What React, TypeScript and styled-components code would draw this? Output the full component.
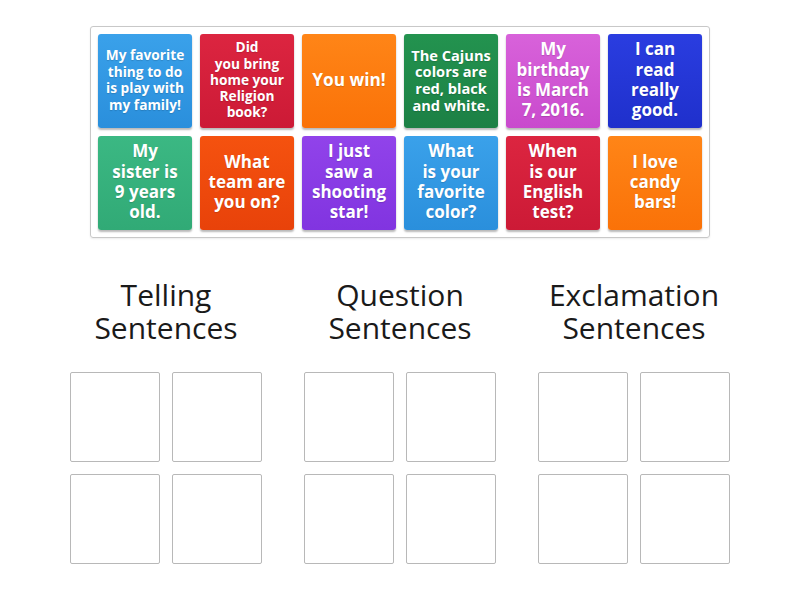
import React from "react";
import styled, { createGlobalStyle } from "styled-components";

const Global = createGlobalStyle`
  html, body { margin: 0; padding: 0; background: #ffffff; }
  body { font-family: "Open Sans", "DejaVu Sans", sans-serif; }
`;

const Page = styled.div`
  width: 800px;
  height: 600px;
  display: flex;
  flex-direction: column;
  align-items: center;
  padding-top: 26px;
  box-sizing: border-box;
`;

const Tray = styled.div`
  width: 620px;
  box-sizing: border-box;
  border: 1px solid #c8c8c8;
  border-radius: 3px;
  padding: 7px;
  display: grid;
  grid-template-columns: repeat(6, 94px);
  grid-auto-rows: 94px;
  gap: 8px;
  box-shadow: 0 1px 2px rgba(0, 0, 0, 0.08);
`;

const Tile = styled.div<{ $c1: string; $c2: string; $size: number; $lh: number }>`
  box-sizing: border-box;
  border-radius: 3px;
  background: linear-gradient(180deg, ${(p) => p.$c1} 0%, ${(p) => p.$c2} 100%);
  box-shadow: 0 2px 2px rgba(0, 0, 0, 0.28);
  display: flex;
  align-items: center;
  justify-content: center;
  text-align: center;
  padding: 0 3px 2px;
  color: #ffffff;
  font-weight: 700;
  font-size: ${(p) => p.$size}px;
  line-height: ${(p) => p.$lh}px;
  text-shadow: 0 1px 1px rgba(0, 0, 0, 0.15);
  white-space: nowrap;
`;

const Lines = styled.div`
  display: flex;
  flex-direction: column;
  align-items: center;
`;

const Groups = styled.div`
  margin-top: 40px;
  display: grid;
  grid-template-columns: repeat(3, 192px);
  gap: 42px;
`;

const Group = styled.div`
  display: flex;
  flex-direction: column;
  align-items: center;
`;

const Heading = styled.div`
  font-size: 30px;
  line-height: 33px;
  color: #1a1a1a;
  text-align: center;
  height: 66px;
  white-space: nowrap;
  display: flex;
  flex-direction: column;
  align-items: center;
`;

const Slots = styled.div`
  margin-top: 28px;
  display: grid;
  grid-template-columns: repeat(2, 90px);
  grid-auto-rows: 90px;
  gap: 12px;
`;

const Slot = styled.div`
  box-sizing: border-box;
  border: 1px solid #b8b8b8;
  border-radius: 2px;
  background: #ffffff;
`;

type T = { text: string[]; c1: string; c2: string; size: number; lh: number };

const tiles: T[] = [
  { text: ["My favorite", "thing to do", "is play with", "my family!"], c1: "#3aa1ea", c2: "#2a8fdc", size: 13.7, lh: 16.5 },
  { text: ["Did", "you bring", "home your", "Religion", "book?"], c1: "#dc2540", c2: "#cc1a36", size: 13.7, lh: 16.3 },
  { text: ["You win!"], c1: "#ff8517", c2: "#fa7208", size: 17.2, lh: 20 },
  { text: ["The Cajuns", "colors are", "red, black", "and white."], c1: "#23934f", c2: "#1c8045", size: 14.6, lh: 16.7 },
  { text: ["My", "birthday", "is March", "7, 2016."], c1: "#d862da", c2: "#c94acd", size: 17, lh: 20.3 },
  { text: ["I can", "read", "really", "good."], c1: "#2a3de0", c2: "#1f30cc", size: 17, lh: 20.3 },
  { text: ["My", "sister is", "9 years", "old."], c1: "#3bb883", c2: "#31aa76", size: 17, lh: 20.3 },
  { text: ["What", "team are", "you on?"], c1: "#f5520f", c2: "#e8420a", size: 17, lh: 20.3 },
  { text: ["I just", "saw a", "shooting", "star!"], c1: "#9143ea", c2: "#8134e0", size: 17, lh: 20.3 },
  { text: ["What", "is your", "favorite", "color?"], c1: "#3aa1ea", c2: "#2a8fdc", size: 17, lh: 20.3 },
  { text: ["When", "is our", "English", "test?"], c1: "#dc2540", c2: "#cc1a36", size: 17, lh: 20.3 },
  { text: ["I love", "candy", "bars!"], c1: "#ff8517", c2: "#fa7208", size: 17, lh: 20.3 },
];

const groups = [
  ["Telling", "Sentences"],
  ["Question", "Sentences"],
  ["Exclamation", "Sentences"],
];

export default function App() {
  return (
    <>
      <Global />
      <Page>
        <Tray>
          {tiles.map((t, i) => (
            <Tile key={i} $c1={t.c1} $c2={t.c2} $size={t.size} $lh={t.lh}>
              <Lines>
                {t.text.map((l, j) => (
                  <span key={j}>{l}</span>
                ))}
              </Lines>
            </Tile>
          ))}
        </Tray>
        <Groups>
          {groups.map((g, i) => (
            <Group key={i}>
              <Heading>
                <span>{g[0]}</span>
                <span>{g[1]}</span>
              </Heading>
              <Slots>
                <Slot />
                <Slot />
                <Slot />
                <Slot />
              </Slots>
            </Group>
          ))}
        </Groups>
      </Page>
    </>
  );
}
